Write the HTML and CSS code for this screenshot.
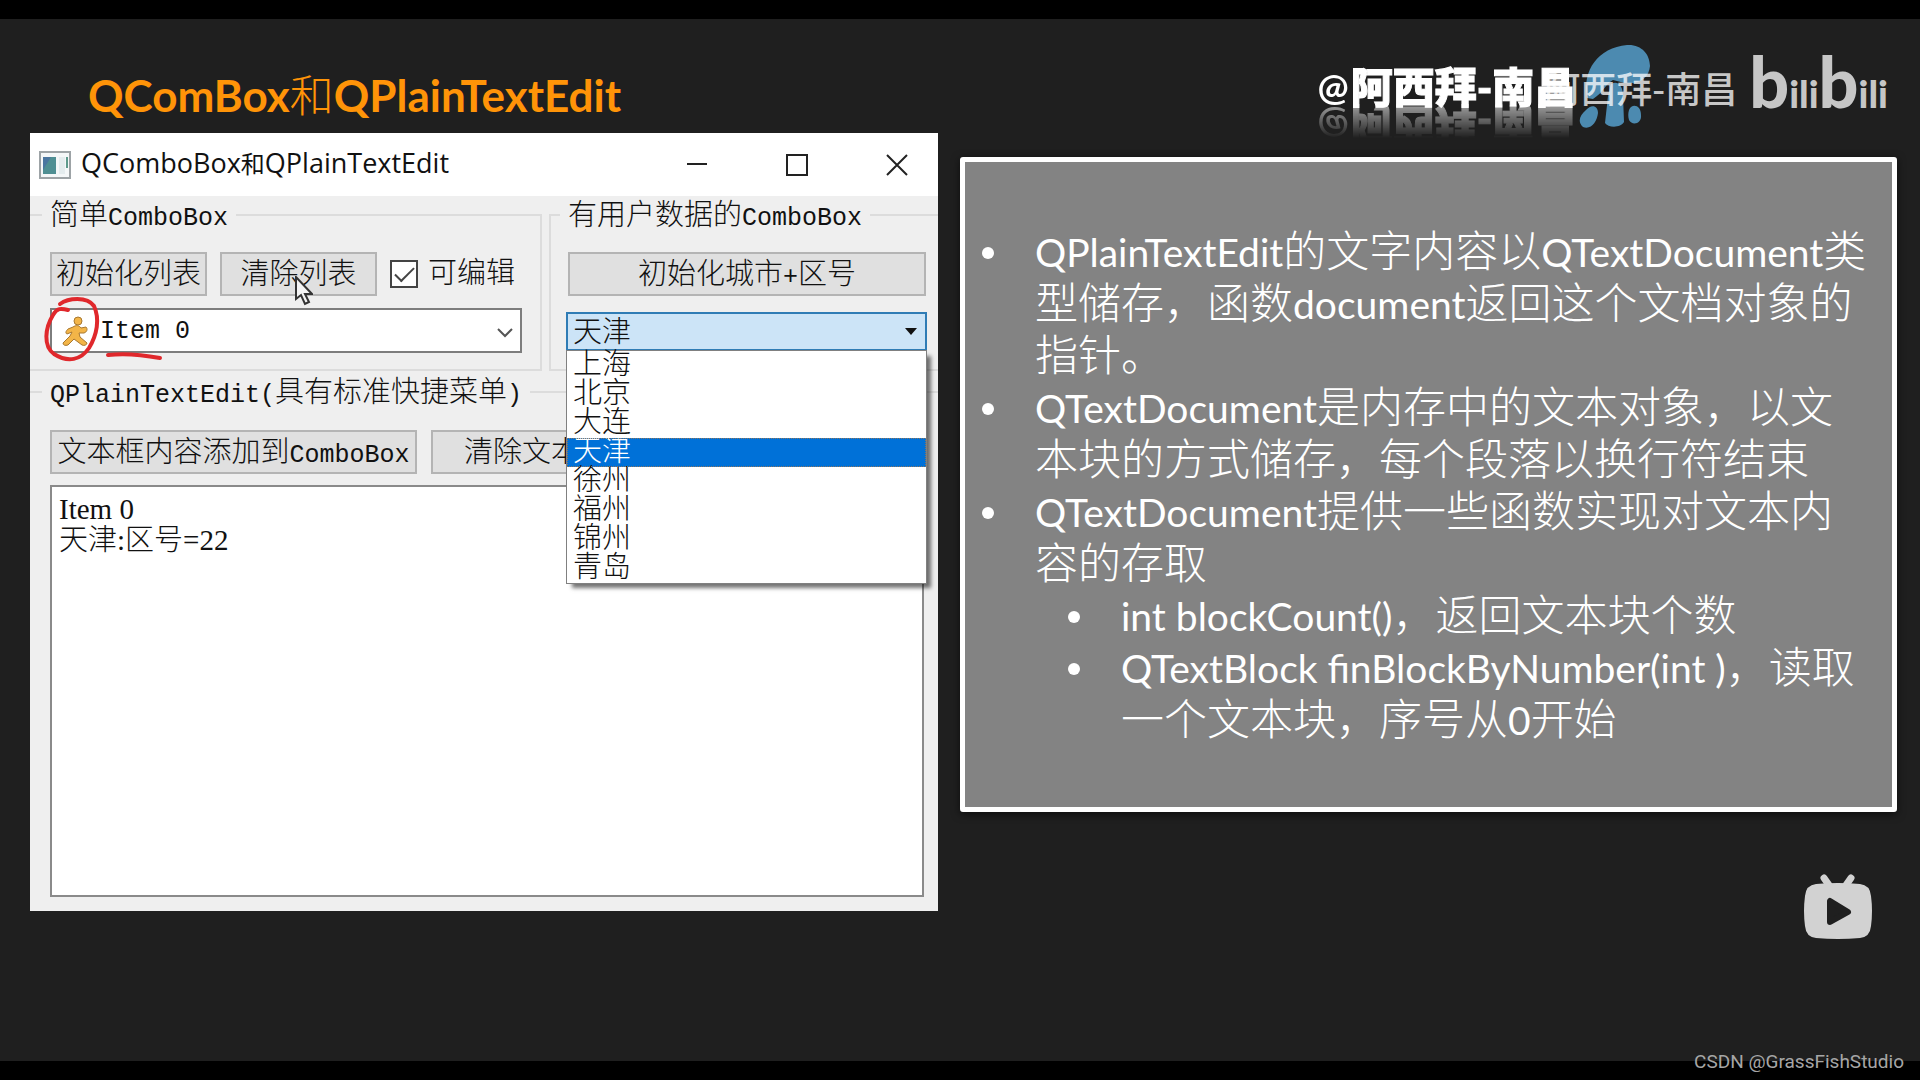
FILE: index.html
```
<!DOCTYPE html>
<html lang="zh-CN">
<head>
    <meta charset="UTF-8">
    <title>QComBox和QPlainTextEdit</title>
    <link rel="stylesheet" href="styles.css">
</head>
<body>
    <div class="slide">
        <header class="slide-header">
            <h1>QComBox<span class="han">和</span>QPlainTextEdit</h1>
            <div class="watermark">
                <svg class="mascot" viewBox="0 0 72 84" width="72" height="84" aria-hidden="true">
                    <path d="M8 54 C3 26 19 4 48 1 C62 0 71 10 71 22 C70 34 60 41 46 39 L34 36 C26 40 25 48 14 55 Z"/>
                    <path d="M32 40 C39 36 44 42 44 52 L45 78 C42 84 29 84 26 79 L29 52 Z"/>
                    <path d="M7 66 C12 60 19 61 19 69 C18 78 12 86 4 83 C-2 78 1 71 7 66 Z"/>
                    <path d="M50 66 C53 59 62 61 62 71 C63 80 53 82 50 76 C49 73 49 69 50 66 Z"/>
                </svg>
                <span class="author">@<b>阿西拜-南昌</b></span>
                <span class="uploader">阿西拜-南昌</span>
                <span class="brand"><span class="big">b</span>ili<span class="big">b</span>ili</span>
            </div>
        </header>

        <main class="slide-body">
            <section class="window">
                <div class="title-bar">
                    <svg class="app-icon" viewBox="0 0 32 28" width="32" height="28" aria-hidden="true">
                        <rect x="1" y="1" width="30" height="26" fill="#f4f7f8" stroke="#9da3a6" stroke-width="2"/>
                        <rect x="4" y="6" width="13" height="17" fill="#4f8f93"/>
                        <path d="M4 6h8L4 19z" fill="#4a76a0"/>
                        <rect x="20" y="6" width="6" height="17" fill="#e4ecee"/>
                        <rect x="27" y="6" width="2" height="11" fill="#5d9a8c"/>
                    </svg>
                    <h2>QComboBox<span class="han">和</span>QPlainTextEdit</h2>
                    <div class="window-buttons">
                        <button type="button" aria-label="最小化"><svg viewBox="0 0 22 22" width="22" height="22"><path d="M1 10h20"/></svg></button>
                        <button type="button" aria-label="最大化"><svg viewBox="0 0 22 22" width="22" height="22"><rect x="1" y="1" width="20" height="20"/></svg></button>
                        <button type="button" aria-label="关闭"><svg viewBox="0 0 22 22" width="22" height="22"><path d="M1 1l20 20M21 1L1 21"/></svg></button>
                    </div>
                </div>

                <div class="group-row">
                    <fieldset class="group simple-group">
                        <legend>简单<span class="en">ComboBox</span></legend>
                        <div class="button-row">
                            <button type="button" class="btn btn-list">初始化列表</button>
                            <button type="button" class="btn btn-list">清除列表
                                <svg class="cursor" viewBox="0 0 18 30" width="18" height="30" aria-hidden="true">
                                    <path d="M1 1v22l5-4 4 9 4-2-4-8h7z"/>
                                </svg>
                            </button>
                            <input type="checkbox" id="editable" checked>
                            <label for="editable">可编辑</label>
                        </div>
                        <div class="combo">
                            <svg class="item-icon" viewBox="0 0 26 30" width="26" height="30" aria-hidden="true">
                                <circle cx="16" cy="5" r="4"/>
                                <path d="M11 11 C14 9 17 9 19 12 L24 11 C26 13 25 16 22 17 L17 17 L18 21 L25 27 C25 29 22 30 20 29 L12 23 L6 29 C3 30 1 29 1 27 L8 20 L10 16 L5 18 C3 17 4 15 6 13 Z"/>
                            </svg>
                            <input type="text" class="combo-input" aria-label="列表项" value="Item 0">
                            <button type="button" class="combo-arrow" aria-label="展开">
                                <svg viewBox="0 0 16 10" width="16" height="10"><path d="M1 1l7 7 7-7"/></svg>
                            </button>
                            <svg class="pen-marks" viewBox="0 0 120 70" width="120" height="70" aria-hidden="true">
                                <path d="M16 9 C24 3 43 1 50 11 C56 24 53 40 45 53 C37 65 24 68 10 59 C-1 51 1 33 9 20 C13 13 17 13 24 15"/>
                                <path d="M64 60 C80 58 100 60 116 63"/>
                            </svg>
                        </div>
                    </fieldset>

                    <fieldset class="group data-group">
                        <legend>有用户数据的<span class="en">ComboBox</span></legend>
                        <button type="button" class="btn btn-wide">初始化城市<span class="en">+</span>区号</button>
                        <div class="city">
                            <select class="city-select" aria-label="城市">
                                <option>天津</option>
                            </select>
                            <ul class="city-list" role="listbox" aria-label="城市列表">
                                <li role="option">上海</li>
                                <li role="option">北京</li>
                                <li role="option">大连</li>
                                <li role="option" class="selected" aria-selected="true">天津</li>
                                <li role="option">徐州</li>
                                <li role="option">福州</li>
                                <li role="option">锦州</li>
                                <li role="option">青岛</li>
                            </ul>
                        </div>
                    </fieldset>
                </div>

                <fieldset class="group text-group">
                    <legend><span class="en">QPlainTextEdit(</span>具有标准快捷菜单<span class="en">)</span></legend>
                    <div class="text-buttons">
                        <button type="button" class="btn btn-add">文本框内容添加到<span class="en">ComboBox</span></button>
                        <button type="button" class="btn btn-clear">清除文本</button>
                    </div>
                    <textarea class="plain-text" aria-label="文本框" spellcheck="false">Item 0
天津:区号=22</textarea>
                </fieldset>
            </section>

            <section class="notes">
                <ul>
                    <li><span class="lat">QPlainTextEdit</span>的文字内容以<span class="lat">QTextDocument</span>类<br>型储存，函数<span class="lat">document</span>返回这个文档对象的<br>指针。</li>
                    <li><span class="lat">QTextDocument</span>是内存中的文本对象，以文<br>本块的方式储存，每个段落以换行符结束</li>
                    <li><span class="lat">QTextDocument</span>提供一些函数实现对文本内<br>容的存取
                        <ul>
                            <li><span class="lat">int blockCount()</span>，返回文本块个数</li>
                            <li><span class="lat">QTextBlock finBlockByNumber(int )</span>，读取<br>一个文本块，序号从<span class="lat">0</span>开始</li>
                        </ul>
                    </li>
                </ul>
            </section>
        </main>

        <svg class="tv-icon" viewBox="0 0 68 66" width="68" height="66" aria-hidden="true">
            <path d="M20 4l7 10M47 4l-7 10" stroke="#d2d2d2" stroke-width="7" stroke-linecap="round"/>
            <path d="M12 10 Q34 8 56 10 Q66 11 67 22 Q69 37 67 52 Q66 63 56 64 Q34 66 12 64 Q2 63 1 52 Q-1 37 1 22 Q2 11 12 10Z" fill="#d2d2d2"/>
            <path d="M26 27v21l18-10z" fill="#1f1f1f" stroke="#1f1f1f" stroke-width="6" stroke-linejoin="round"/>
        </svg>
        <span class="csdn">CSDN @GrassFishStudio</span>
    </div>
</body>
</html>
```
FILE: styles.css
```
:root {
    --slide-color: #1f1f1f;
    --window-color: #efefef;
    --line-color: #dcdcdc;
    --title-color: #ff9408;
    --pen-color: #e0282c;
}
* {
    margin: 0;
    padding: 0;
    box-sizing: border-box;
}
body {
    background: #000;
    font-family: "Lato", "Noto Sans CJK SC", sans-serif;
}
.slide {
    position: relative;
    min-height: 100vh;
    background: var(--slide-color);
    border-top: 19px solid #000;
    border-bottom: 19px solid #000;
}
.slide-header {
    display: flex;
    justify-content: space-between;
    height: 114px;
    padding: 0 32px 0 88px;
}
h1 {
    font-size: 44px;
    font-weight: 700;
    line-height: 50px;
    padding-top: 51px;
    color: var(--title-color);
    white-space: nowrap;
}
h1 .han {
    font-weight: 300;
}

/* watermark */
.watermark {
    position: relative;
    display: flex;
    align-items: center;
    height: 60px;
    margin-top: 38px;
    white-space: nowrap;
}
.mascot {
    position: absolute;
    left: 262px;
    top: -13px;
    fill: #4c8ab0;
}
.author {
    display: flex;
    align-items: center;
    gap: 2px;
    font-size: 37px;
    font-weight: 700;
    line-height: 44px;
    color: #fff;
    -webkit-box-reflect: below -6px linear-gradient(transparent 20%, rgba(255, 255, 255, 0.6));
}
.author b {
    font-size: 42px;
    font-weight: 900;
    -webkit-text-stroke: 1px #fff;
}
.uploader {
    position: relative;
    margin-left: -32px;
    font-family: "Noto Sans CJK SC", sans-serif;
    font-size: 36px;
    line-height: 44px;
    font-weight: 500;
    color: rgba(255, 255, 255, 0.75);
}
.brand {
    display: flex;
    align-items: baseline;
    margin-left: 12px;
    font-size: 38px;
    line-height: 60px;
    font-weight: 900;
    color: #c6c6c6;
}
.brand .big {
    font-size: 70px;
}

/* two columns */
.slide-body {
    display: grid;
    grid-template-columns: 908fr 937fr;
    gap: 22px;
    align-items: start;
    padding: 0 23px 0 30px;
}
.window {
    background: var(--window-color);
    color: #111;
    font-family: "Liberation Mono", "Noto Sans CJK SC", monospace;
    font-size: 29px;
    font-weight: 300;
    line-height: 38px;
    padding-bottom: 14px;
}
.window button, .window input, .window select, .window textarea {
    font: inherit;
    color: inherit;
}
.window .en {
    font-size: 25px;
    line-height: 1;
}
.title-bar {
    display: flex;
    align-items: center;
    height: 63px;
    padding-left: 9px;
    background: #fff;
}
.title-bar h2 {
    margin-left: 10px;
    padding-bottom: 3px;
    font-family: "Open Sans", "Noto Sans CJK SC", sans-serif;
    font-size: 27px;
    font-weight: 400;
    white-space: nowrap;
}
.title-bar .han {
    font-size: 24px;
}
.window-buttons {
    display: flex;
    gap: 18px;
    margin-left: auto;
}
.window-buttons button {
    width: 82px;
    height: 60px;
    display: flex;
    align-items: center;
    justify-content: center;
    border: none;
    background: transparent;
}
.window-buttons svg {
    fill: none;
    stroke: #222;
    stroke-width: 2;
}

/* group boxes */
.group-row {
    display: grid;
    grid-template-columns: 512fr 389fr;
    gap: 7px;
}
.group {
    min-width: 0;
    border: 2px solid var(--line-color);
}
.group legend {
    margin-left: -8px;
    padding: 6px 8px 0;
    line-height: 32px;
    white-space: nowrap;
}
.simple-group {
    border-left: none;
    padding: 18px 18px 16px 20px;
}
.data-group {
    border-right: none;
    padding: 18px 12px 16px 17px;
}
.text-group {
    margin-top: 2px;
    border-width: 2px 0 0;
    padding: 19px 14px 0 20px;
}
.window .btn {
    height: 44px;
    padding-top: 6px;
    line-height: 34px;
    background: #e0e0e0;
    border: 2px solid #b4b4b4;
    white-space: nowrap;
}
.button-row {
    display: flex;
    align-items: center;
    margin-bottom: 12px;
}
.btn-list {
    position: relative;
    flex: 0 0 157px;
    margin-right: 13px;
}
.cursor {
    position: absolute;
    left: 73px;
    top: 22px;
    fill: #f4f4f4;
    stroke: #333;
    stroke-width: 2;
}
input[type="checkbox"] {
    appearance: none;
    width: 28px;
    height: 28px;
    border: 2px solid #444;
    background: #fff;
    display: grid;
    place-items: center;
}
input[type="checkbox"]:checked::before {
    content: "";
    width: 17px;
    height: 8px;
    border-left: 2px solid #444;
    border-bottom: 2px solid #444;
    transform: rotate(-45deg);
    margin-bottom: 5px;
}
.button-row label {
    margin-left: 10px;
    padding-top: 4px;
    white-space: nowrap;
}
.combo {
    position: relative;
    display: flex;
    align-items: center;
    height: 45px;
    padding-left: 10px;
    background: #fff;
    border: 2px solid #7d7d7d;
}
.item-icon {
    fill: #f3b548;
    stroke: #a87830;
    stroke-width: 1;
}
.combo .combo-input {
    flex: 1;
    min-width: 0;
    margin-left: 12px;
    padding-top: 3px;
    font-size: 25px;
    border: none;
    outline: none;
    background: transparent;
}
.combo-arrow {
    width: 30px;
    border: none;
    background: transparent;
    line-height: 10px;
}
.combo-arrow svg {
    fill: none;
    stroke: #555;
    stroke-width: 2;
}
.pen-marks {
    position: absolute;
    left: -8px;
    top: -15px;
    fill: none;
    stroke: var(--pen-color);
    stroke-width: 4;
    stroke-linecap: round;
}

/* open drop-down */
.btn-wide {
    width: 100%;
    margin-bottom: 16px;
}
.city {
    position: relative;
    margin: 0 -1px 0 -2px;
}
.city-select {
    display: block;
    width: 100%;
    height: 39px;
    padding: 2px 0 0 5px;
    appearance: none;
    border: 2px solid #2f7cb5;
    border-radius: 0;
    background: #cce4f7;
}
.city::after {
    content: "";
    position: absolute;
    right: 10px;
    top: 16px;
    border: 6px solid transparent;
    border-top: 7px solid #111;
    border-bottom: none;
}
.city-list {
    position: absolute;
    z-index: 2;
    top: 38px;
    left: 0;
    right: 0;
    list-style: none;
    background: #fff;
    border: 1px solid #808080;
    box-shadow: 5px 5px 4px -1px rgba(0, 0, 0, 0.55);
}
.city-list li {
    height: 29px;
    line-height: 32px;
    padding-left: 6px;
}
.city-list .selected {
    background: #0071d8;
    color: #fff;
    outline: 1px dotted #8a7560;
    outline-offset: -1px;
}

/* plain text area */
.text-buttons {
    display: flex;
    gap: 14px;
    margin-bottom: 11px;
}
.btn-add {
    flex: 0 0 367px;
}
.btn-clear {
    flex: 0 0 182px;
}
.window .plain-text {
    display: block;
    width: 100%;
    height: 412px;
    padding: 7px;
    resize: none;
    background: #fff;
    border: 2px solid #8a8a8a;
    outline: none;
    font-family: "Liberation Serif", "Noto Sans CJK SC", serif;
    line-height: 31px;
}

/* notes panel */
.notes {
    margin-top: 24px;
    min-height: 655px;
    display: flex;
    align-items: center;
    padding: 0 0 6px 70px;
    background: #838383;
    border: 5px solid #fff;
    border-radius: 3px;
    box-shadow: 0 2px 8px rgba(0, 0, 0, 0.6);
    color: #fff;
    font-family: "Noto Sans CJK SC", sans-serif;
    font-size: 43px;
    font-weight: 300;
    line-height: 52px;
    white-space: nowrap;
}
.notes ul {
    list-style: none;
}
.notes ul ul {
    padding-left: 86px;
}
.notes li {
    position: relative;
}
.notes li::before {
    content: "";
    position: absolute;
    left: -53px;
    top: 25px;
    width: 12px;
    height: 12px;
    border-radius: 50%;
    background: #fff;
}
.lat {
    font-family: "Lato", sans-serif;
    font-size: 39px;
    font-weight: 400;
    line-height: 1;
}

.tv-icon {
    position: absolute;
    right: 48px;
    bottom: 121px;
    fill: none;
}
.csdn {
    position: absolute;
    right: 16px;
    bottom: -13px;
    font-family: "Roboto", sans-serif;
    font-size: 19px;
    line-height: 24px;
    color: #a6a6a6;
}
```
